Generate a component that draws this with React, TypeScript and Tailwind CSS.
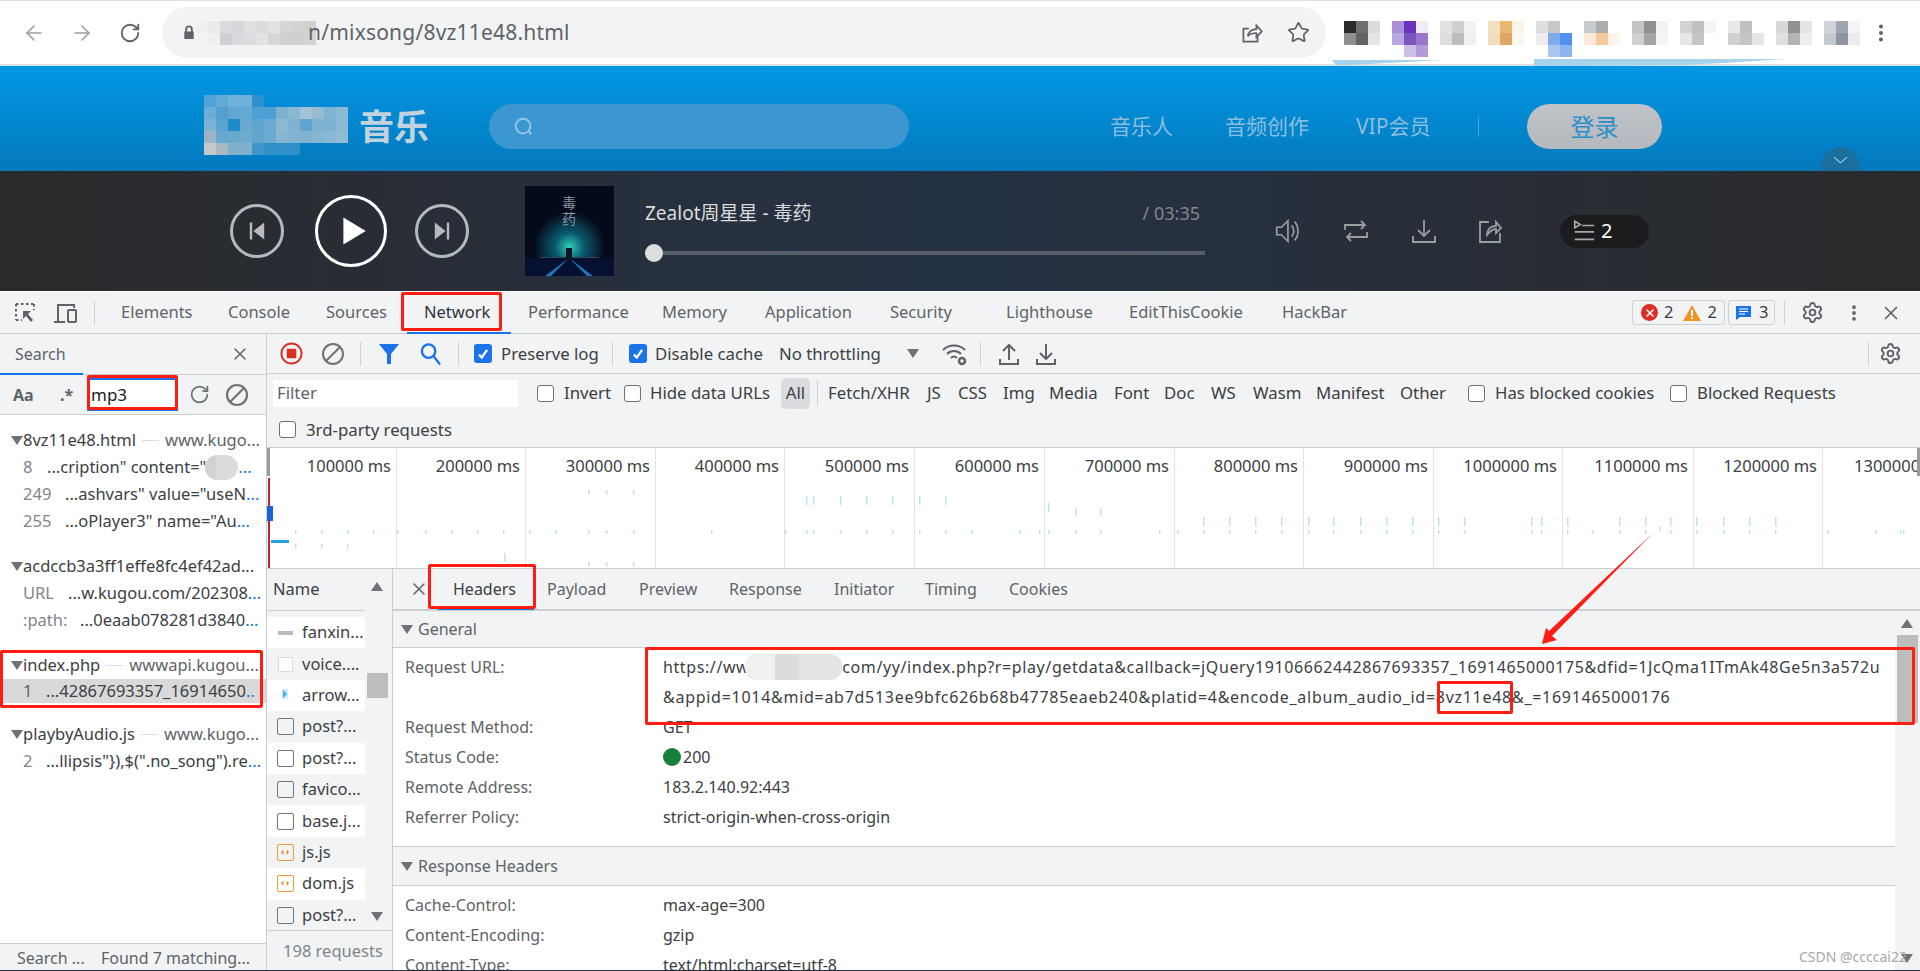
import { ArrowLeft, ArrowRight, RotateCw, Star, Settings, X, MoreVertical } from "lucide-react";

type Cells = string[][];

const urlBlur: Cells = [
  ["#f1efee", "#ecebea", "#d9dbe0", "#d6d8dc", "#e0e0e2", "#dcdcde", "#e2e2e3", "#d6d6d7", "#d2d2d3", "#d0d0d0"],
  ["#f4f3f3", "#f0efef", "#ced0d6", "#d8dade", "#dcdce0", "#e2e2e3", "#d6d6d8", "#d0d0d2", "#cfcfd0", "#d4d4d4"],
];

const logoBlur: Cells = [
  ["#4fa3d6", "#5eaad8", "#6fb2da", "#6db0d8", "#2f90d0", "", "", "", "", "", "", "", ""],
  ["#6aaed6", "#4f9fd1", "#5fa7d2", "#62a9d3", "#4da0d4", "#4da0d4", "#7cb2d0", "#8ab9d4", "#a4c4d6", "#94bcd3", "#7fb4d3", "#89bad6", ""],
  ["#7ab3d4", "#5ba4cf", "#1f8cca", "#6aa9cf", "#5fa6cf", "#6aaad0", "#8cb8d0", "#80b3cf", "#5ea5cf", "#7db3d1", "#7db2d1", "#8bbad5", ""],
  ["#9db4c4", "#68a8ce", "#6aa9ce", "#6fabcd", "#62a6cd", "#6aaad0", "#88b6d0", "#82b4d0", "#7fb3d0", "#85b6d2", "#8bb9d3", "#92bcd4", ""],
  ["#c6c9cc", "#aab8c2", "#7fb0cc", "#7fb0cd", "#3d97cb", "#2f90c8", "#2f90c8", "#2f90c8", "", "", "", "", ""],
];

const extIcons: Cells[] = [
  [["#2a2a2a", "#6f6f6f", "#dcdcdc"], ["#8f8f8f", "#646464", "#e6e6e6"]],
  [["#a88fd6", "#6a32bd", "#f0ecfa"], ["#b8a6df", "#7a55bc", "#9a76cc"], ["", "#cdbfe6", "#b49bd8"]],
  [["#e2e2e2", "#cfcfcf", "#f2f2f2"], ["#dedede", "#bdbdbd", "#f0f0f0"]],
  [["#f3dfbf", "#e6b96e", "#fbf4e8"], ["#f2dcc0", "#dea664", "#fbf6ee"]],
  [["#dedede", "#c8c8c8", "#ffffff"], ["#ededed", "#7fabe8", "#5092ee"], ["", "#a9c6f0", "#8cb5ee"]],
  [["#c8ccce", "#a9aeb1", "#ffffff"], ["#fbe9d8", "#f4c99d", "#fdf4ea"]],
  [["#c4c4c4", "#8f9092", "#f2f2f2"], ["#cfd0d1", "#a3a5a8", "#f5f5f5"]],
  [["#d2d2d4", "#bfc0c2", "#f4f4f4"], ["#e6e6e7", "#c4c5c7", "#ffffff"]],
  [["#e8e8e8", "#bfc0c2", "#ffffff"], ["#cfd0d2", "#c4c5c7", "#e6e6e7"]],
  [["#d8d8d8", "#909294", "#e4e4e4"], ["#e0e0e0", "#b2b4b6", "#eeeeee"]],
  [["#d0d4da", "#a0a6b0", "#f4f4f4"], ["#c4c8d0", "#8e94a2", "#ebebeb"]],
];

const mainTabs = [
  { name: "Elements", w: "w-[107px]" },
  { name: "Console", w: "w-[98px]" },
  { name: "Sources", w: "w-[98px]" },
  { name: "Network", w: "w-[104px]" },
  { name: "Performance", w: "w-[134px]" },
  { name: "Memory", w: "w-[103px]" },
  { name: "Application", w: "w-[125px]" },
  { name: "Security", w: "w-[116px]" },
  { name: "Lighthouse", w: "w-[123px]" },
  { name: "EditThisCookie", w: "w-[153px]" },
  { name: "HackBar", w: "w-[70px]" },
];

const filterTypes = [
  { name: "Fetch/XHR", w: "w-[99px]" },
  { name: "JS", w: "w-[31px]" },
  { name: "CSS", w: "w-[45px]" },
  { name: "Img", w: "w-[46px]" },
  { name: "Media", w: "w-[65px]" },
  { name: "Font", w: "w-[50px]" },
  { name: "Doc", w: "w-[47px]" },
  { name: "WS", w: "w-[42px]" },
  { name: "Wasm", w: "w-[63px]" },
  { name: "Manifest", w: "w-[84px]" },
  { name: "Other", w: "w-[67px]" },
];

const timelineCols = [
  { label: "100000 ms", w: "w-[130px]" },
  { label: "200000 ms", w: "w-[129px]" },
  { label: "300000 ms", w: "w-[130px]" },
  { label: "400000 ms", w: "w-[129px]" },
  { label: "500000 ms", w: "w-[130px]" },
  { label: "600000 ms", w: "w-[130px]" },
  { label: "700000 ms", w: "w-[130px]" },
  { label: "800000 ms", w: "w-[129px]" },
  { label: "900000 ms", w: "w-[130px]" },
  { label: "1000000 ms", w: "w-[129px]" },
  { label: "1100000 ms", w: "w-[131px]" },
  { label: "1200000 ms", w: "w-[129px]" },
];

const ticks: { y: number; h: number; xs: number[] }[] = [
  { y: 489, h: 5, xs: [588, 606, 633] },
  { y: 495, h: 9, xs: [806, 813, 840, 866, 892, 919, 945] },
  { y: 502, h: 9, xs: [1048] },
  { y: 507, h: 8, xs: [1075, 1100] },
  { y: 516, h: 9, xs: [1203, 1229, 1255, 1281, 1308, 1333, 1360, 1386, 1412, 1438, 1464, 1531, 1541, 1567, 1619, 1645, 1670, 1696, 1723, 1749, 1775] },
  { y: 525, h: 5, xs: [1659] },
  { y: 529, h: 4, xs: [295, 321, 347, 373, 397, 425, 451, 477, 503, 529, 555, 588, 606, 633, 711, 785, 806, 813, 840, 866, 892, 919, 945, 971, 1019, 1039, 1048, 1075, 1100, 1159, 1177, 1203, 1229, 1255, 1281, 1308, 1333, 1360, 1386, 1412, 1438, 1464, 1531, 1541, 1567, 1592, 1619, 1645, 1670, 1696, 1723, 1749, 1775, 1827, 1875, 1900, 1903] },
  { y: 543, h: 5, xs: [295, 321, 347] },
  { y: 552, h: 9, xs: [504] },
  { y: 561, h: 5, xs: [588, 606, 633] },
];

const nameRows = [
  { name: "fanxin...", icon: "dash", bg: "bg-white" },
  { name: "voice....", icon: "blank", bg: "bg-[#f1f3f4]" },
  { name: "arrow...", icon: "img", bg: "bg-white" },
  { name: "post?...", icon: "doc", bg: "bg-[#f1f3f4]" },
  { name: "post?...", icon: "doc", bg: "bg-white" },
  { name: "favico...", icon: "doc", bg: "bg-[#f1f3f4]" },
  { name: "base.j...", icon: "doc", bg: "bg-white" },
  { name: "js.js", icon: "js", bg: "bg-[#f1f3f4]" },
  { name: "dom.js", icon: "js", bg: "bg-white" },
  { name: "post?...", icon: "doc", bg: "bg-[#f1f3f4]" },
];

function Mosaic({ rows, cell }: { rows: Cells; cell: string }) {
  return (
    <div className="flex flex-col">
      {rows.map((row, i) => (
        <div key={i} className="flex">
          {row.map((c, j) => (
            <div key={j} className={cell} style={{ backgroundColor: c || "transparent" }} />
          ))}
        </div>
      ))}
    </div>
  );
}

function Checkbox({ on, className = "" }: { on?: boolean; className?: string }) {
  if (on) {
    return (
      <span className={`flex h-[19px] w-[18px] shrink-0 items-center justify-center rounded-[3px] bg-[#1a73e8] ${className}`}>
        <svg viewBox="0 0 12 12" className="h-3.5 w-3.5" fill="none" stroke="#fff" strokeWidth="2">
          <path d="M2.5 6.5 5 9l4.5-6.5" />
        </svg>
      </span>
    );
  }
  return <span className={`block h-[17px] w-[17px] shrink-0 rounded-[3px] border-[1.5px] border-[#6e7175] bg-white ${className}`} />;
}

function VDivider({ className = "" }: { className?: string }) {
  return <div className={`w-px bg-[#cdd0d4] ${className}`} />;
}

function Triangle({ className = "" }: { className?: string }) {
  return <span className={`block h-0 w-0 border-x-[6px] border-t-[9px] border-x-transparent border-t-[#6e7175] ${className}`} />;
}

function RedBox({ className }: { className: string }) {
  return <div className={`pointer-events-none absolute rounded-[2px] border-[3px] border-[#fd1d12] ${className}`} />;
}

function RoundIcon({ size, children }: { size: string; children: React.ReactNode }) {
  return <div className={`flex items-center justify-center ${size}`}>{children}</div>;
}

function NameIcon({ kind }: { kind: string }) {
  if (kind === "dash") return <div className="h-[4px] w-[15px] bg-[#b9bbbe]" />;
  if (kind === "blank") return <div className="h-[15px] w-[15px] border border-[#dadce0] bg-white" />;
  if (kind === "img")
    return (
      <svg viewBox="0 0 16 16" className="h-4 w-4">
        <rect x="5" y="2" width="6" height="10" fill="#cfe8fb" />
        <path d="M6 3l4 4-4 4z" fill="#35b5ee" />
      </svg>
    );
  if (kind === "js")
    return (
      <div className="flex h-[17px] w-[17px] items-center justify-center rounded-[2px] border-[1.5px] border-[#f09a35]">
        <svg viewBox="0 0 12 8" className="w-[10px]" fill="#e8891c">
          <path d="M4 1v6L1 4zM8 1v6l3-3z" />
        </svg>
      </div>
    );
  return <div className="h-[17px] w-[17px] rounded-[2px] border-[1.5px] border-[#74777b]" />;
}

function ChromeBar() {
  return (
    <div className="relative flex h-[66px] shrink-0 items-center border-t border-b-2 border-t-[#dee1e6] border-b-[#dee1e6] bg-white">
      <div className="flex w-[162px] items-center pl-[22px] text-[#9aa0a6]">
        <ArrowLeft size={24} strokeWidth={1.6} />
        <ArrowRight size={24} strokeWidth={1.6} className="ml-[24px]" />
        <RotateCw size={22} strokeWidth={2} className="ml-[25px] text-[#5f6368]" />
      </div>
      <div className="flex h-[51px] w-[1164px] items-center rounded-full bg-[#f1f3f4] pl-[21px]">
        <svg viewBox="0 0 12 16" className="h-[15px] w-[12px]" fill="#5f6368">
          <path d="M2 7V4.5a4 4 0 0 1 8 0V7h1v8H1V7zm2 0h4V4.5a2 2 0 0 0-4 0z" />
        </svg>
        <div className="ml-[1px]">
          <Mosaic rows={urlBlur} cell="h-3 w-3" />
        </div>
        <span className="-ml-[8px] text-[21px] tracking-[0.2px] text-[#5f6368]">n/mixsong/8vz11e48.html</span>
        <div className="ml-auto flex items-center gap-[23px] pr-[16px] text-[#5f6368]">
          <svg viewBox="0 0 24 24" className="h-[26px] w-[26px]" fill="none" stroke="currentColor" strokeWidth="1.6">
            <path d="M18 14v6H5V8h5" />
            <path d="M9 15c1-4.500 4-6.500 8-6.500V5l5 5.500-5 5V12c-3 0-5.500 0-8 3z" />
          </svg>
          <Star size={23} strokeWidth={1.8} />
        </div>
      </div>
      <div className="ml-[18px] flex gap-[12px]">
        {extIcons.map((rows, i) => (
          <div key={i} className="h-[24px] w-[36px]">
            <Mosaic rows={rows} cell="h-3 w-3" />
          </div>
        ))}
      </div>
      <MoreVertical size={22} className="ml-[10px] text-[#5f6368]" strokeWidth={2.4} />
      <svg viewBox="0 0 1920 12" className="absolute left-0 top-[56px] h-[12px] w-[1920px]" fill="#a8d3ec">
        <path d="M1332 3h110l-36 2-56 3h-14zM1534 2h250l-60 4-40 2-100 1-45 3h-5z" />
      </svg>
    </div>
  );
}

function SiteHeader() {
  return (
    <div className="relative flex h-[105px] shrink-0 items-center bg-linear-to-b from-[#0297e4] to-[#0379bd] pl-[204px] pt-[16px]">
      <div className="-mt-[4px]">
        <Mosaic rows={logoBlur} cell="h-3 w-3" />
      </div>
      <span className="-ml-[1px] text-[35px] font-bold leading-none text-[#c3d2dd]">音乐</span>
      <div className="ml-[60px] flex h-[45px] w-[420px] items-center rounded-full bg-[#3c96cf] pl-[24px]">
        <svg viewBox="0 0 24 24" className="h-[22px] w-[22px]" fill="none" stroke="#92c5e4" strokeWidth="2.2">
          <circle cx="11" cy="11" r="8" />
          <path d="m17 17 3 3" />
        </svg>
      </div>
      <div className="ml-[201px] flex items-center text-[21px] text-[#8cbfde]">
        <span className="w-[115px]">音乐人</span>
        <span className="w-[131px]">音频创作</span>
        <span className="w-[122px]">VIP会员</span>
      </div>
      <div className="h-[21px] w-px bg-[#4aa3d6]" />
      <div className="ml-[48px] flex h-[45px] w-[135px] items-center justify-center rounded-full bg-linear-to-b from-[#bfc2c7] to-[#b5b8bd] text-[24px] text-[#2a8fc9]">
        登录
      </div>
      <div className="absolute bottom-0 left-[1821px] flex h-[24px] w-[39px] justify-center overflow-hidden rounded-t-full bg-[#1a6f9f]">
        <svg viewBox="0 0 16 8" className="mt-[9px] h-[8px] w-[15px]" fill="none" stroke="#a9cfe6" strokeWidth="1.2">
          <path d="m1 1 7 6 7-6" />
        </svg>
      </div>
    </div>
  );
}

function Player() {
  return (
    <div className="flex h-[121px] shrink-0 items-center border-b border-b-white bg-linear-to-r from-[#2a2a2b] via-[#253245] to-[#2a2a2b] pl-[230px]">
      <RoundIcon size="h-[54px] w-[54px] rounded-full border-[3px] border-[#b7b9bb]">
        <svg viewBox="0 0 20 20" className="h-[24px] w-[24px]" fill="#b7b9bb">
          <path d="M4 3h2v14H4zM16 3v14L7 10z" />
        </svg>
      </RoundIcon>
      <div className="ml-[31px]">
        <RoundIcon size="h-[72px] w-[72px] rounded-full border-[3px] border-white">
          <svg viewBox="0 0 20 20" className="ml-[3px] h-[32px] w-[32px]" fill="#fff">
            <path d="M4 1.500 18 10 4 18.500z" />
          </svg>
        </RoundIcon>
      </div>
      <div className="ml-[28px]">
        <RoundIcon size="h-[54px] w-[54px] rounded-full border-[3px] border-[#b7b9bb]">
          <svg viewBox="0 0 20 20" className="h-[24px] w-[24px]" fill="#b7b9bb">
            <path d="M14 3h2v14h-2zM4 3v14l9-7z" />
          </svg>
        </RoundIcon>
      </div>
      <svg viewBox="0 0 89 90" className="ml-[56px] h-[90px] w-[89px]">
        <defs>
          <radialGradient id="glow" cx="0.5" cy="0.68" r="0.4">
            <stop offset="0" stopColor="#2fd0b8" />
            <stop offset="0.4" stopColor="#0b5a6e" />
            <stop offset="1" stopColor="#050a1a" />
          </radialGradient>
        </defs>
        <rect width="89" height="90" fill="url(#glow)" />
        <rect y="72" width="89" height="18" fill="#061030" />
        <path d="M44 72 20 90h6l18-18 18 18h6z" fill="#1d74b8" />
        <rect x="15" y="71" width="59" height="1" fill="#33455c" />
        <rect x="41" y="62" width="6" height="12" fill="#0a1420" />
        <text x="44" y="22" fontSize="14" fill="#8a94a0" textAnchor="middle">毒</text>
        <text x="44" y="38" fontSize="14" fill="#8a94a0" textAnchor="middle">药</text>
      </svg>
      <div className="ml-[31px] flex w-[560px] flex-col">
        <div className="flex h-[26px] items-center">
          <span className="text-[19px] text-[#dcdcdc]">Zealot周星星 - 毒药</span>
          <span className="ml-auto pr-[5px] text-[18px] text-[#85878b]">/ 03:35</span>
        </div>
        <div className="mt-[17px] flex items-center">
          <div className="h-[18px] w-[18px] rounded-full bg-[#dedede]" />
          <div className="h-[4px] flex-1 bg-[#585e69]" />
        </div>
      </div>
      <div className="ml-[69px] flex items-center text-[#9b9da1]">
        <svg viewBox="0 0 26 30" className="h-[28px] w-[26px]" fill="none" stroke="currentColor" strokeWidth="1.800">
          <path d="M2 11h5l7-7v22l-7-7H2zM18 9c3 3 3 9 0 12M21 5c5 5 5 15 0 20" />
        </svg>
        <svg viewBox="0 0 26 26" className="ml-[43px] h-[26px] w-[26px]" fill="none" stroke="currentColor" strokeWidth="1.800">
          <path d="M2 12V7h20M18 3l4 4-4 4M24 14v5H4M8 23l-4-4 4-4" />
        </svg>
        <svg viewBox="0 0 26 26" className="ml-[42px] h-[26px] w-[26px]" fill="none" stroke="currentColor" strokeWidth="1.800">
          <path d="M13 2v16M7 12l6 6 6-6M2 18v6h22v-6" />
        </svg>
        <svg viewBox="0 0 26 26" className="ml-[40px] h-[26px] w-[26px]" fill="none" stroke="currentColor" strokeWidth="1.800">
          <path d="M12 4H3v20h20v-9" />
          <path d="M10 17c0-5 3-9 9-9V4l5 6-5 5v-4c-4 0-6 2-9 6z" />
        </svg>
      </div>
      <div className="ml-[57px] flex h-[33px] w-[89px] items-center rounded-full bg-[#1c1c1f] pl-[12px]">
        <svg viewBox="0 0 26 24" className="h-[24px] w-[24px]" fill="none" stroke="#a8a8aa" strokeWidth="1.800">
          <path d="M3 1.500 9 5 3 8.500zM11 6h13M3 13h21M3 21h21" />
        </svg>
        <span className="ml-[5px] text-[20px] text-white">2</span>
      </div>
    </div>
  );
}

function TopTabs() {
  return (
    <div className="relative flex h-[42px] shrink-0 items-center border-b border-b-[#cacdd1] bg-[#f1f3f4] text-[16.5px] text-[#5f6368]">
      <div className="flex w-[121px] items-center pl-[13px]">
        <svg viewBox="0 0 24 24" className="h-[24px] w-[24px]" fill="none" stroke="#5f6368" strokeWidth="2">
          <path d="M3 3h18M3 3v16M21 3v6M3 19h6" strokeDasharray="2.500 2.500" />
          <path d="M10 10h8l-3 3 5 6-2 2-5-6-3 3z" fill="#5f6368" stroke="none" />
        </svg>
        <svg viewBox="0 0 26 24" className="ml-[16px] h-[24px] w-[26px]" fill="none" stroke="#5f6368" strokeWidth="2">
          <path d="M1 21h11M5 21V4h16v3" />
          <rect x="15" y="9" width="8" height="12" rx="1" />
        </svg>
        <VDivider className="ml-[15px] h-[24px]" />
      </div>
      {mainTabs.map((t) => (
        <span key={t.name} className={`${t.w} shrink-0 ${t.name === "Network" ? "text-[#303437]" : ""}`}>
          {t.name}
        </span>
      ))}
      <div className="ml-auto flex items-center pr-[18px]">
        <div className="flex h-[25px] w-[93px] items-center rounded-[3px] border border-[#cdd0d4] pl-[8px] text-[#3c4043]">
          <span className="flex h-[17px] w-[17px] items-center justify-center rounded-full bg-[#d93025]">
            <X size={12} color="#fff" strokeWidth={3} />
          </span>
          <span className="ml-[6px]">2</span>
          <svg viewBox="0 0 18 16" className="ml-[10px] h-[16px] w-[18px]">
            <path d="M9 0 18 16H0z" fill="#f29423" />
            <rect x="8" y="5" width="2" height="6" fill="#fff" />
            <rect x="8" y="12" width="2" height="2" fill="#fff" />
          </svg>
          <span className="ml-[6px]">2</span>
        </div>
        <div className="ml-[3px] flex h-[25px] w-[47px] items-center rounded-[3px] border border-[#cdd0d4] pl-[7px] text-[#3c4043]">
          <svg viewBox="0 0 16 16" className="h-[16px] w-[16px]">
            <path d="M0 1h15v11H4l-4 3z" fill="#1a73e8" />
            <path d="M3 4h9M3 6.500h9M3 9h6" stroke="#fff" strokeWidth="1.200" />
          </svg>
          <span className="ml-[7px]">3</span>
        </div>
        <VDivider className="ml-[9px] h-[24px]" />
        <Settings size={23} className="ml-[16px]" strokeWidth={2} />
        <MoreVertical size={20} className="ml-[20px]" strokeWidth={2.6} />
        <X size={22} className="ml-[16px]" strokeWidth={1.8} />
      </div>
      <div className="absolute bottom-[-1px] left-[407px] h-[2px] w-[104px] bg-[#1a73e8]" />
    </div>
  );
}

function SearchPane() {
  return (
    <div className="flex w-[267px] shrink-0 flex-col border-r border-r-[#cacdd1] text-[16px] text-[#3c4043]">
      <div className="relative flex h-[41px] shrink-0 items-center justify-between border-b border-b-[#cacdd1] pl-[15px] pr-[16px]">
        <span className="text-[#5f6368]">Search</span>
        <X size={20} strokeWidth={1.8} className="text-[#5f6368]" />
        <div className="absolute bottom-[-1px] left-0 h-[2px] w-[83px] bg-[#1a73e8]" />
      </div>
      <div className="flex h-[40px] shrink-0 items-center border-b border-b-[#cacdd1] pl-[13px]">
        <span className="w-[47px] font-bold text-[#5f6368]">Aa</span>
        <span className="w-[27px] font-bold text-[#5f6368]">.*</span>
        <div className="flex h-[33px] w-[91px] items-center border-y-2 border-y-[#1a73e8] bg-white pl-[4px] text-[17px] text-[#202124]">mp3</div>
        <RotateCw size={21} strokeWidth={2} className="ml-[11px] text-[#6e7175]" />
        <svg viewBox="0 0 24 24" className="ml-[15px] h-[24px] w-[24px]" fill="none" stroke="#6e7175" strokeWidth="2.2">
          <circle cx="12" cy="12" r="10" />
          <path d="M5 19 19 5" />
        </svg>
      </div>
      <div className="flex flex-1 flex-col gap-[18px] overflow-hidden whitespace-nowrap bg-white pl-[11px] pt-[12px] text-[16.5px]">
        <div>
          <div className="flex h-[27px] items-center">
            <Triangle />
            <span>8vz11e48.html</span>
            <span className="mx-[6px] h-px w-[17px] bg-[#dadce0]" />
            <span className="text-[#5f6368]">www.kugo...</span>
          </div>
          <div className="flex h-[27px] items-center pl-[12px]">
            <span className="w-[24px] text-[#80868b]">8</span>
            <span>...cription" content="</span>
            <span className="-ml-[1px] flex h-[25px] w-[33px] overflow-hidden rounded-full bg-[#dcdcdd]">
              <span className="h-full w-[11px] bg-[#d2d2d3]" />
            </span>
            <span className="text-[#1a73e8]">...</span>
          </div>
          <div className="flex h-[27px] items-center pl-[12px]">
            <span className="w-[42px] text-[#80868b]">249</span>
            <span>...ashvars" value="useN</span>
            <span className="text-[#1a73e8]">...</span>
          </div>
          <div className="flex h-[27px] items-center pl-[12px]">
            <span className="w-[42px] text-[#80868b]">255</span>
            <span>...oPlayer3" name="Au</span>
            <span className="text-[#1a73e8]">...</span>
          </div>
        </div>
        <div>
          <div className="flex h-[27px] items-center">
            <Triangle />
            <span>acdccb3a3ff1effe8fc4ef42ad...</span>
          </div>
          <div className="flex h-[27px] items-center pl-[12px]">
            <span className="w-[45px] text-[#80868b]">URL</span>
            <span>...w.kugou.com/202308</span>
            <span className="text-[#1a73e8]">...</span>
          </div>
          <div className="flex h-[27px] items-center pl-[12px]">
            <span className="w-[57px] text-[#80868b]">:path:</span>
            <span>...0eaab078281d3840</span>
            <span className="text-[#1a73e8]">...</span>
          </div>
        </div>
        <div>
          <div className="flex h-[27px] items-center">
            <Triangle />
            <span>index.php</span>
            <span className="mx-[6px] h-px w-[17px] bg-[#dadce0]" />
            <span className="text-[#5f6368]">wwwapi.kugou...</span>
          </div>
          <div className="-ml-[11px] flex h-[24px] items-center bg-[#d9d9d9] pl-[23px]">
            <span className="w-[23px] text-[#5f6368]">1</span>
            <span>...42867693357_16914650</span>
            <span className="text-[#1a73e8]">..</span>
          </div>
        </div>
        <div>
          <div className="flex h-[27px] items-center">
            <Triangle />
            <span>playbyAudio.js</span>
            <span className="mx-[6px] h-px w-[17px] bg-[#dadce0]" />
            <span className="text-[#5f6368]">www.kugo...</span>
          </div>
          <div className="flex h-[27px] items-center pl-[12px]">
            <span className="w-[23px] text-[#80868b]">2</span>
            <span>{'...llipsis"}),$(".no_song").re'}</span>
            <span className="text-[#1a73e8]">...</span>
          </div>
        </div>
      </div>
      <div className="flex h-[28px] shrink-0 items-center border-t border-t-[#cacdd1] pl-[17px] text-[#5f6368]">
        <span className="w-[84px]">Search ...</span>
        <span>Found 7 matching...</span>
      </div>
    </div>
  );
}

function NetToolbar() {
  return (
    <div className="flex h-[40px] shrink-0 items-center border-b border-b-[#cacdd1] pl-[13px] text-[16.8px] text-[#3c4043]">
      <svg viewBox="0 0 24 24" className="h-[23px] w-[23px]">
        <circle cx="12" cy="12" r="10.500" fill="none" stroke="#d93025" strokeWidth="2" />
        <rect x="7" y="7" width="10" height="10" rx="1" fill="#d93025" />
      </svg>
      <svg viewBox="0 0 24 24" className="ml-[18px] h-[24px] w-[24px]" fill="none" stroke="#6e7175" strokeWidth="2">
        <circle cx="12" cy="12" r="10" />
        <path d="M5 19 19 5" />
      </svg>
      <VDivider className="ml-[15px] h-[24px]" />
      <svg viewBox="0 0 20 24" className="ml-[18px] h-[24px] w-[20px]" fill="#1a73e8">
        <path d="M0 2h20l-8 10v10H8V12z" />
      </svg>
      <svg viewBox="0 0 22 24" className="ml-[21px] h-[24px] w-[21px]" fill="none" stroke="#1a73e8" strokeWidth="2.400">
        <circle cx="9" cy="9" r="7" />
        <path d="m14 14 7 9" />
      </svg>
      <VDivider className="ml-[17px] h-[24px]" />
      <Checkbox on className="ml-[15px]" />
      <span className="ml-[9px] w-[111px]">Preserve log</span>
      <VDivider className="h-[24px]" />
      <Checkbox on className="ml-[16px]" />
      <span className="ml-[8px] w-[124px]">Disable cache</span>
      <span className="w-[128px]">No throttling</span>
      <Triangle />
      <svg viewBox="0 0 26 26" className="ml-[23px] h-[26px] w-[26px]" fill="none" stroke="#5f6368" strokeWidth="2">
        <path d="M1 9c6-6 16-6 22 0M5 13c4-4 10-4 14 0M9 17c2-2 4-2 6 0" />
        <circle cx="20" cy="20" r="3" strokeWidth="2.500" />
      </svg>
      <VDivider className="ml-[12px] h-[24px]" />
      <svg viewBox="0 0 20 24" className="ml-[18px] h-[24px] w-[20px]" fill="none" stroke="#5f6368" strokeWidth="2">
        <path d="M10 18V3M4 9l6-6 6 6M1 17v5h18v-5" />
      </svg>
      <svg viewBox="0 0 20 24" className="ml-[17px] h-[24px] w-[20px]" fill="none" stroke="#5f6368" strokeWidth="2">
        <path d="M10 2v15M4 11l6 6 6-6M1 17v5h18v-5" />
      </svg>
      <div className="ml-auto flex items-center pr-[18px]">
        <VDivider className="mr-[10px] h-[24px]" />
        <Settings size={23} strokeWidth={2} className="text-[#5f6368]" />
      </div>
    </div>
  );
}

function FilterRow() {
  return (
    <div className="flex h-[74px] shrink-0 flex-col border-b border-b-[#cacdd1] text-[16.8px] text-[#3c4043]">
      <div className="flex h-[38px] items-center whitespace-nowrap pl-[6px]">
        <div className="flex h-[27px] w-[245px] items-center bg-white pl-[4px] text-[#5f6368]">Filter</div>
        <Checkbox className="ml-[19px]" />
        <span className="ml-[10px] w-[60px]">Invert</span>
        <Checkbox />
        <span className="ml-[9px] w-[131px]">Hide data URLs</span>
        <span className="flex h-[31px] w-[29px] items-center justify-center rounded-[5px] bg-[#dadce0]">All</span>
        <VDivider className="ml-[7px] mr-[10px] h-[26px]" />
        {filterTypes.map((t) => (
          <span key={t.name} className={`${t.w} shrink-0`}>
            {t.name}
          </span>
        ))}
        <Checkbox className="ml-[1px]" />
        <span className="ml-[10px] w-[175px] shrink-0">Has blocked cookies</span>
        <Checkbox />
        <span className="ml-[10px] shrink-0">Blocked Requests</span>
      </div>
      <div className="flex flex-1 items-center pl-[12px]">
        <Checkbox />
        <span className="ml-[10px]">3rd-party requests</span>
      </div>
    </div>
  );
}

function Timeline() {
  return (
    <div className="relative flex h-[121px] shrink-0 overflow-hidden border-b border-b-[#cacdd1] bg-white text-[16.5px] text-[#3c4043]">
      {timelineCols.map((c) => (
        <div key={c.label} className={`${c.w} shrink-0 whitespace-nowrap border-r border-r-[#e0e2e5] pr-[5px] pt-[6px] text-right`}>
          {c.label}
        </div>
      ))}
      <div className="w-[129px] shrink-0 pl-[31px] pt-[6px] whitespace-nowrap">1300000 ms</div>
      <svg viewBox="267 447 1653 120" className="absolute left-0 top-0 h-[120px] w-[1653px]">
        {ticks.flatMap((t) =>
          t.xs.map((x, i) => <rect key={`${t.y}-${i}`} x={x} y={t.y} width="1.500" height={t.h} fill="#bfe3f6" />),
        )}
        <rect x="267" y="447" width="3" height="28" fill="#9a9c9f" />
        <rect x="268" y="477" width="2" height="90" fill="#b3263a" />
        <rect x="267" y="505" width="6" height="15" fill="#1a62d8" />
        <rect x="271" y="539" width="18" height="3" fill="#20a5e2" />
        <rect x="1917" y="447" width="3" height="28" fill="#9a9c9f" />
      </svg>
    </div>
  );
}

function NamePane() {
  return (
    <div className="flex w-[126px] shrink-0 flex-col border-r border-r-[#cacdd1] text-[16.5px]">
      <div className="flex min-h-0 flex-1">
        <div className="flex w-[98px] shrink-0 flex-col overflow-hidden">
          <div className="flex h-[42px] shrink-0 items-center border-b border-b-[#cacdd1] pl-[6px] text-[#3c4043]">Name</div>
          <div className="h-[6px] shrink-0 bg-[#f1f3f4]" />
          {nameRows.map((r, i) => (
            <div key={i} className={`flex h-[31.4px] shrink-0 items-center ${r.bg}`}>
              <div className="flex w-[35px] shrink-0 justify-center pl-[1px]">
                <NameIcon kind={r.icon} />
              </div>
              <span className="truncate whitespace-nowrap text-[#3c4043]">{r.name}</span>
            </div>
          ))}
        </div>
        <div className="relative w-[25px] shrink-0">
          <Triangle className="absolute left-[6px] top-[13px] rotate-180" />
          <div className="absolute left-[2px] top-[104px] h-[25px] w-[21px] bg-[#bdbdbd]" />
          <Triangle className="absolute bottom-[9px] left-[6px]" />
        </div>
      </div>
      <div className="flex h-[41px] shrink-0 items-center border-t border-t-[#cacdd1] pl-[16px] text-[#80868b]">198 requests</div>
    </div>
  );
}

function HeaderRow({ k, v }: { k: string; v: string }) {
  return (
    <div className="flex h-[30px] items-center">
      <span className="w-[270px] shrink-0 pl-[12px] text-[#5f6368]">{k}</span>
      <span className="text-[#3c4043]">{v}</span>
    </div>
  );
}

function DetailsPane() {
  return (
    <div className="flex min-w-0 flex-1 flex-col overflow-hidden text-[16px]">
      <div className="relative flex h-[42px] shrink-0 items-center border-b-2 border-b-[#cacdd1] text-[#5f6368]">
        <X size={20} strokeWidth={1.8} className="ml-[16px]" />
        <span className="ml-[24px] w-[94px] text-[#3c4043]">Headers</span>
        <span className="w-[92px]">Payload</span>
        <span className="w-[90px]">Preview</span>
        <span className="w-[105px]">Response</span>
        <span className="w-[91px]">Initiator</span>
        <span className="w-[84px]">Timing</span>
        <span>Cookies</span>
        <div className="absolute bottom-[-1px] left-[45px] h-[2px] w-[96px] bg-[#1a73e8]" />
      </div>
      <div className="flex min-h-0 flex-1">
        <div className="min-w-0 flex-1 overflow-hidden">
          <div className="flex h-[37px] items-center border-b border-b-[#cacdd1] pl-[8px] text-[#5f6368]">
            <Triangle className="mr-[5px]" />
            General
          </div>
          <div className="flex h-[199px] flex-col border-b border-b-[#cacdd1] bg-white pt-[4px]">
            <div className="flex">
              <span className="flex h-[30px] w-[270px] shrink-0 items-center pl-[12px] text-[#5f6368]">Request URL:</span>
              <div className="text-[#3c4043]">
                <div className="flex h-[30px] items-center whitespace-nowrap tracking-[0.6px]">
                  <span>https://ww</span>
                  <span className="-ml-[4px] flex h-[26px] w-[97px] overflow-hidden rounded-[12px] bg-[#e4e4e4]">
                    <span className="h-full w-[30px] bg-[#f0f0f0]" />
                    <span className="h-full w-[24px] bg-[#dcdcdc]" />
                  </span>
                  <span>com/yy/index.php?r=play/getdata&amp;callback=jQuery19106662442867693357_1691465000175&amp;dfid=1JcQma1ITmAk48Ge5n3a572u</span>
                </div>
                <div className="flex h-[30px] items-center whitespace-nowrap tracking-[0.72px]">
                  &amp;appid=1014&amp;mid=ab7d513ee9bfc626b68b47785eaeb240&amp;platid=4&amp;encode_album_audio_id=8vz11e48&amp;_=1691465000176
                </div>
              </div>
            </div>
            <HeaderRow k="Request Method:" v="GET" />
            <div className="flex h-[30px] items-center">
              <span className="w-[270px] shrink-0 pl-[12px] text-[#5f6368]">Status Code:</span>
              <span className="mr-[2px] h-[18px] w-[18px] rounded-full bg-[#188038]" />
              <span className="text-[#3c4043]">200</span>
            </div>
            <HeaderRow k="Remote Address:" v="183.2.140.92:443" />
            <HeaderRow k="Referrer Policy:" v="strict-origin-when-cross-origin" />
          </div>
          <div className="flex h-[39px] items-center border-b border-b-[#cacdd1] pl-[8px] text-[#5f6368]">
            <Triangle className="mr-[5px]" />
            Response Headers
          </div>
          <div className="bg-white pt-[4px]">
            <HeaderRow k="Cache-Control:" v="max-age=300" />
            <HeaderRow k="Content-Encoding:" v="gzip" />
            <HeaderRow k="Content-Type:" v="text/html;charset=utf-8" />
          </div>
        </div>
        <div className="relative w-[25px] shrink-0 bg-[#f1f3f4]">
          <Triangle className="absolute left-[6px] top-[8px] rotate-180" />
          <div className="absolute left-[2px] top-[24px] h-[88px] w-[21px] bg-[#bdbdbd]" />
          <Triangle className="absolute bottom-[8px] left-[6px]" />
        </div>
      </div>
    </div>
  );
}

export default function App() {
  return (
    <div className="relative flex h-[971px] w-[1920px] flex-col overflow-hidden bg-[#f1f3f4] font-['Noto_Sans','Noto_Sans_CJK_SC',sans-serif]">
      <ChromeBar />
      <SiteHeader />
      <Player />
      <TopTabs />
      <div className="flex min-h-0 flex-1">
        <SearchPane />
        <div className="flex min-w-0 flex-1 flex-col">
          <NetToolbar />
          <FilterRow />
          <Timeline />
          <div className="flex min-h-0 flex-1">
            <NamePane />
            <DetailsPane />
          </div>
        </div>
      </div>

      {/* annotations drawn on top of the screenshot */}
      <RedBox className="left-[401px] top-[292px] h-[39px] w-[101px]" />
      <RedBox className="left-[87px] top-[375px] h-[35px] w-[91px]" />
      <RedBox className="left-[0px] top-[650px] h-[58px] w-[263px]" />
      <RedBox className="left-[428px] top-[564px] h-[45px] w-[108px]" />
      <RedBox className="left-[645px] top-[647px] h-[78px] w-[1270px]" />
      <RedBox className="left-[1437px] top-[681px] h-[33px] w-[76px]" />
      <svg viewBox="0 0 1920 971" className="pointer-events-none absolute left-0 top-0 h-[971px] w-[1920px]">
        <path d="M1653 533 1552 636l5 4-15 4 4-16 3 3z" fill="#fd1d12" />
      </svg>
      <div className="absolute left-[1799px] top-[946px] text-[14px] text-[#a8a8a8]">CSDN @ccccai22</div>
      <div className="absolute bottom-0 left-0 h-px w-full bg-[#26303c]" />
    </div>
  );
}
